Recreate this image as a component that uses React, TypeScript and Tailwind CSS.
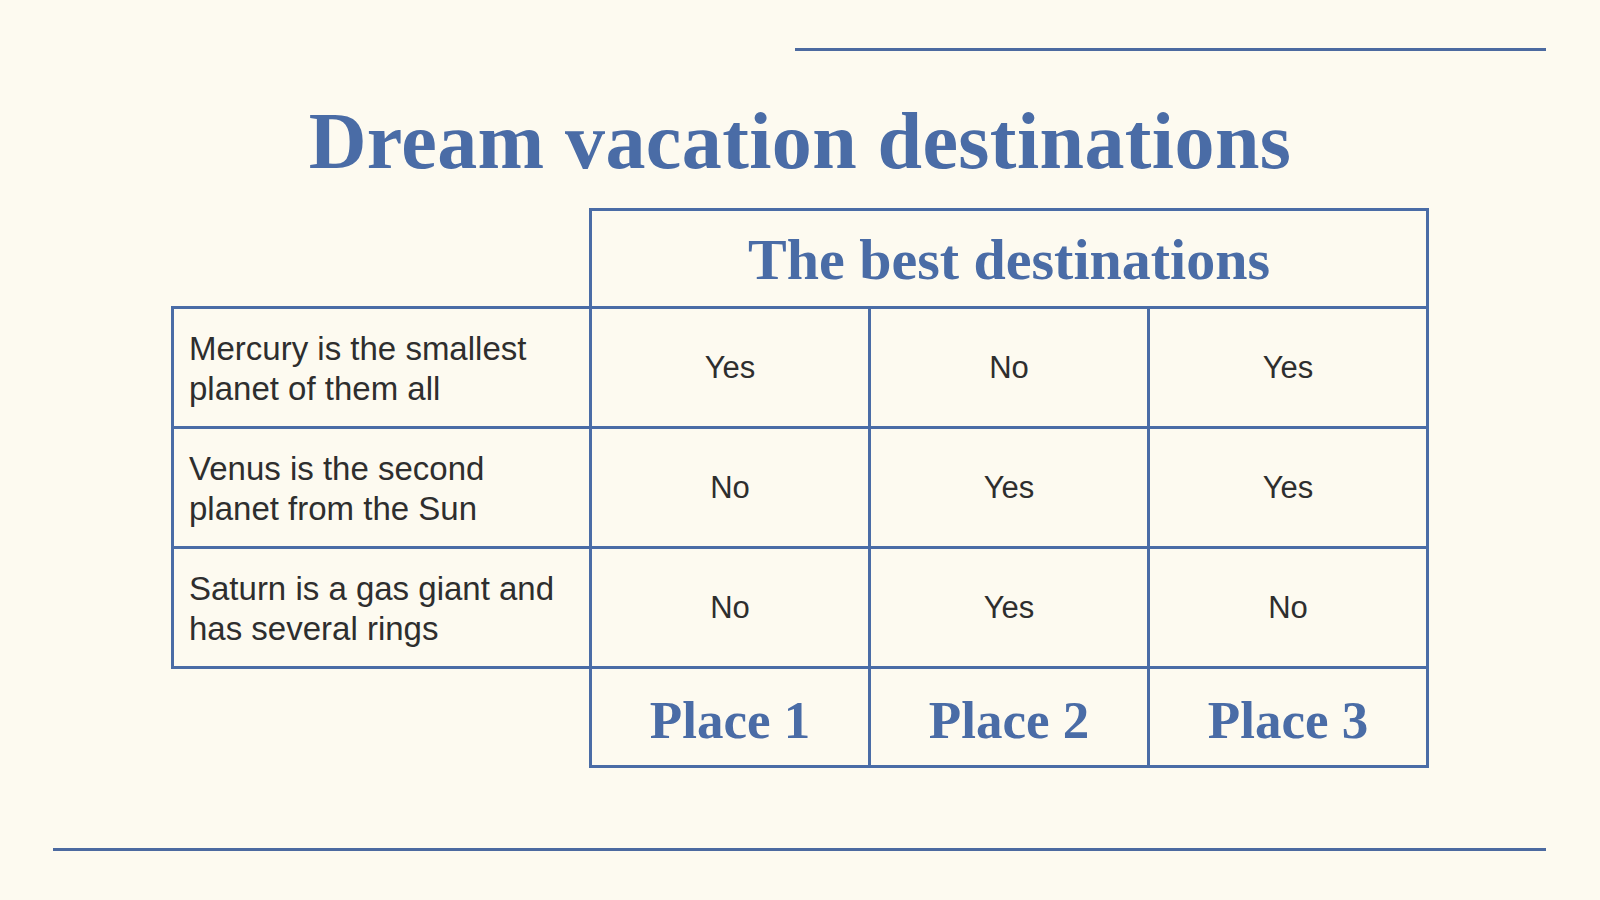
const rows = [
  { label: ["Mercury is the smallest", "planet of them all"], values: ["Yes", "No", "Yes"] },
  { label: ["Venus is the second", "planet from the Sun"], values: ["No", "Yes", "Yes"] },
  { label: ["Saturn is a gas giant and", "has several rings"], values: ["No", "Yes", "No"] },
];

const serif = "font-['Liberation_Serif',serif] font-bold text-[#4a6ca6]";
const cell = "border-[3px] border-[#4a6ca6]";

export default function App() {
  return (
    <div className="flex h-[900px] w-[1600px] flex-col overflow-hidden bg-[#fdfaf0]">
      {/* top rule */}
      <div className="mr-[54px] mt-[48px] h-[3px] w-[751px] self-end bg-[#4c6aa0]" />

      <h1 className={`${serif} mt-[50px] text-center text-[80px] leading-[80px] tracking-[0.4px]`}>
        Dream vacation destinations
      </h1>

      <table className="ml-[171px] mt-[27px] w-[1255px] table-fixed border-collapse">
        <colgroup>
          <col className="w-[418px]" />
          <col className="w-[279px]" />
          <col className="w-[279px]" />
          <col className="w-[279px]" />
        </colgroup>
        <tbody>
          <tr className="h-[98px]">
            <td />
            <td colSpan={3} className={`${cell} ${serif} pt-[2px] text-center text-[58px] leading-none`}>
              The best destinations
            </td>
          </tr>
          {rows.map((row) => (
            <tr key={row.label[0]} className="h-[120px]">
              <td className={`${cell} pl-[15px] pt-[2px] font-['Liberation_Sans',sans-serif] text-[33px] leading-[40px] text-[#2e2e2e]`}>
                {row.label[0]}
                <br />
                {row.label[1]}
              </td>
              {row.values.map((v, i) => (
                <td
                  key={i}
                  className={`${cell} pt-[2px] text-center font-['Liberation_Sans',sans-serif] text-[31px] text-[#2e2e2e]`}
                >
                  {v}
                </td>
              ))}
            </tr>
          ))}
          <tr className="h-[99px]">
            <td />
            {["Place 1", "Place 2", "Place 3"].map((p) => (
              <td key={p} className={`${cell} ${serif} pt-[6px] text-center text-[53px] leading-none`}>
                {p}
              </td>
            ))}
          </tr>
        </tbody>
      </table>

      {/* bottom rule */}
      <div className="ml-[53px] mt-[80px] h-[3px] w-[1493px] bg-[#4c6aa0]" />
    </div>
  );
}
